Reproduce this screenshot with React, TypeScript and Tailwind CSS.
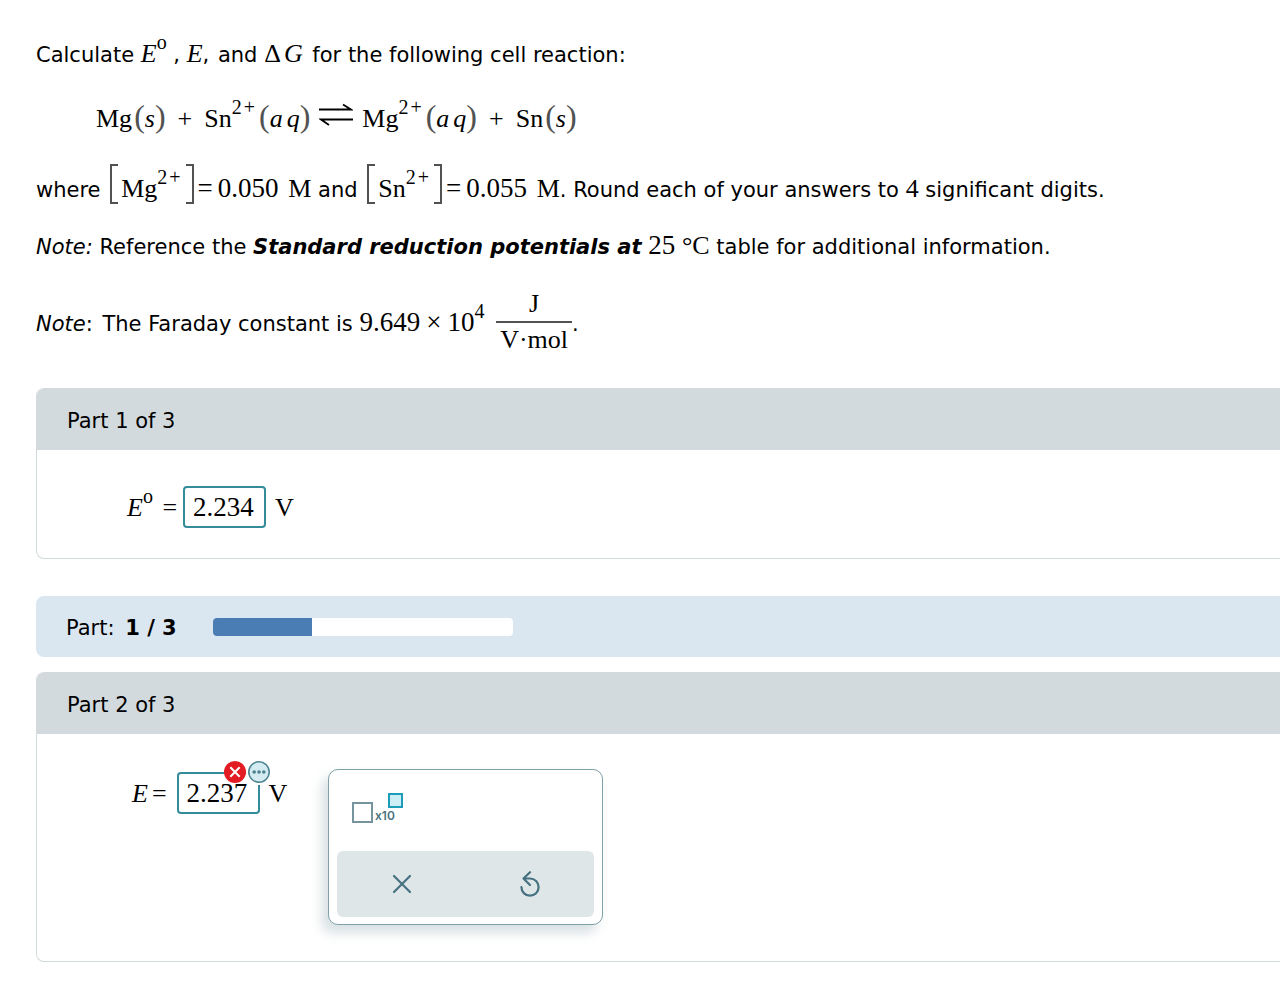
import React, { useState } from 'react';

const math = "font-['Liberation_Serif',serif] text-[26px] leading-none";
const number = "font-['Liberation_Serif',serif] text-[27px] leading-none";

const Sup: React.FC<{ children: React.ReactNode }> = ({ children }) => (
  <sup className="static align-[13px] text-[20px] leading-none">{children}</sup>
);

const Charge = () => (
  <Sup>2<span className="mx-[2px]">+</span></Sup>
);

const Phase: React.FC<{ children: React.ReactNode }> = ({ children }) => (
  <span className="ml-[2px]">
    <span className="text-[32px] leading-none text-neutral-600">(</span>
    <i>{children}</i>
    <span className="text-[32px] leading-none text-neutral-600">)</span>
  </span>
);

const Aqueous = () => (
  <Phase>a<span className="ml-1">q</span></Phase>
);

const Concentration: React.FC<{ symbol: string }> = ({ symbol }) => (
  <span className={`${math} mr-1 ml-[3px] inline-block`}>
    <span className="inline-block h-10 w-2 border-y-2 border-l-2 border-neutral-600 align-[-7px]" />
    <span className="px-[3px]">{symbol}<Charge /></span>
    <span className="inline-block h-10 w-2 border-y-2 border-r-2 border-neutral-600 align-[-7px]" />
  </span>
);

const Equilibrium = () => (
  <svg viewBox="0 0 34 24" className="mx-[9px] inline-block h-6 w-[34px]" fill="none" stroke="black" strokeWidth="1.8" aria-label="is in equilibrium with">
    <path d="M0 6.5H32L24 1.5M34 16.5H2L10 22" />
  </svg>
);

const Panel: React.FC<{ title: string; children: React.ReactNode }> = ({ title, children }) => (
  <section className="rounded-l-lg border-b border-l border-[#d2dadd]">
    <h2 className="rounded-tl-lg bg-[#d2dadd] px-[30px] pt-[17px] pb-[13px] leading-8">{title}</h2>
    {children}
  </section>
);

const inputStyle = 'h-[42px] w-[83px] rounded-sm border-2 border-[#348b99] bg-white px-2 text-[27px] outline-none';

const App: React.FC = () => {
  const [standard, setStandard] = useState('2.234');
  const [potential, setPotential] = useState('2.237');

  return (
    <main className="min-h-screen overflow-x-hidden bg-white pt-8 pb-10 pl-9 font-['DejaVu_Sans',sans-serif] text-[21px] text-black">
      <p className="leading-9">
        Calculate <i className={math}>E</i><span className={math}><Sup>o</Sup></span> , <i className={math}>E</i>, <span className="ml-[2px]">and</span> <span className={math}>Δ<i className="mx-[3px]">G</i></span> for the following cell reaction:
      </p>

      <p className={`${math} mt-6 flex items-baseline pl-[60px]`}>
        <span>Mg<Phase>s</Phase></span>
        <span className="mx-3">+</span>
        <span>Sn<Charge /><Aqueous /></span>
        <Equilibrium />
        <span>Mg<Charge /><Aqueous /></span>
        <span className="mx-3">+</span>
        <span>Sn<Phase>s</Phase></span>
      </p>

      <p className="mt-8">
        where <Concentration symbol="Mg" /><span className={number}>=<span className="mr-[3px] ml-[5px]">0.050</span></span> <span className={math}>M</span> and <Concentration symbol="Sn" /><span className={number}>=<span className="mr-[3px] ml-[5px]">0.055</span></span> <span className={math}>M</span>. Round each of your answers to <span className={math}>4</span> significant digits.
      </p>

      <p className="mt-6 leading-8">
        <i>Note:</i> Reference the <b className="italic">Standard reduction potentials at</b> <span className={number}>25</span> <span className={math}>°C</span> table for additional information.
      </p>

      <p className="mt-7">
        <i>Note</i>: <span className="ml-[3px]">The</span> Faraday constant is <span className={number}>9.649<span className="mx-[6px]">×</span>10<Sup>4</Sup></span>{' '}
        <span className={`${math} ml-[5px] inline-flex flex-col items-center align-[19px]`}>
          <span className="px-4 pb-1">J</span>
          <span className="border-t-2 border-neutral-600 px-1 pt-1">V·mol</span>
        </span>.
      </p>

      <div className="mt-[35px]">
        <Panel title="Part 1 of 3">
          <div className={`${math} flex items-baseline pt-9 pb-[30px] pl-[90px]`}>
            <label htmlFor="standard" className="mr-[6px]"><i>E</i><Sup>o</Sup> <span className="ml-[3px]">=</span></label>
            <input id="standard" className={inputStyle} value={standard} onChange={e => setStandard(e.target.value)} />
            <span className="ml-[9px]">V</span>
          </div>
        </Panel>
      </div>

      <div className="mt-[37px] mb-[15px] flex h-[61px] items-center rounded-l-lg bg-[#dbe7f0] pl-[30px]">
        <span className="mr-9 pt-1">Part: <b className="ml-1">1 / 3</b></span>
        <div className="h-[18px] w-[300px] overflow-hidden rounded bg-white">
          <div className="h-full w-[33%] bg-[#4a7db3]" />
        </div>
      </div>

      <Panel title="Part 2 of 3">
        <div className="flex items-start pt-[35px] pb-9 pl-[95px]">
          <div className={`${math} mt-[3px] flex items-baseline`}>
            <label htmlFor="potential" className="mr-[10px]"><i>E</i><span className="ml-1">=</span></label>
            <div className="relative">
              <input id="potential" className={inputStyle} value={potential} onChange={e => setPotential(e.target.value)} />
              <div className="absolute -top-[11px] left-[47px] flex gap-[2px]">
                <svg viewBox="0 0 22 22" className="h-[22px] w-[22px]" aria-label="Incorrect">
                  <circle cx="11" cy="11" r="11" fill="#e31b23" />
                  <path d="M6.3 6.3l9.4 9.4M15.7 6.3l-9.4 9.4" stroke="white" strokeWidth="2" />
                </svg>
                <button aria-label="More information" className="rounded-full ring-2 ring-white">
                  <svg viewBox="0 0 22 22" className="h-[22px] w-[22px]">
                    <circle cx="11" cy="11" r="10.2" fill="#d3ebf1" stroke="#4b8290" strokeWidth="1.5" />
                    <g fill="#4b8290">
                      <circle cx="6.2" cy="11" r="1.8" />
                      <circle cx="11" cy="11" r="1.8" />
                      <circle cx="15.8" cy="11" r="1.8" />
                    </g>
                  </svg>
                </button>
              </div>
            </div>
            <span className="ml-[9px]">V</span>
          </div>

          <div className="ml-[41px] w-[275px] rounded-[10px] border border-[#7fa0a8] bg-white px-2 pt-2 pb-[7px] shadow-[-6px_8px_12px_rgba(60,100,115,0.2)]">
            <button aria-label="Scientific notation" className="mt-[15px] mb-[27px] ml-[15px] block">
              <svg viewBox="0 0 52 31" className="block h-[31px] w-[52px]">
                <rect x="1" y="10" width="19" height="19" fill="white" stroke="#76949e" strokeWidth="2" />
                <rect x="37" y="1" width="13" height="13" fill="#cdeef4" stroke="#1c9cb8" strokeWidth="2" />
                <text x="23" y="27" fontSize="12" fontFamily="Inter, sans-serif" fontWeight="600" fill="#4b7480">x10</text>
              </svg>
            </button>
            <div className="flex h-[66px] rounded-md bg-[#dfe6e8]">
              <button aria-label="Clear" className="flex flex-1 items-center justify-center">
                <svg viewBox="0 0 20 20" className="h-5 w-5" fill="none" stroke="#467180" strokeWidth="2.2" strokeLinecap="round">
                  <path d="M2 2l16 16M18 2L2 18" />
                </svg>
              </button>
              <button aria-label="Undo" className="flex flex-1 items-center justify-center">
                <svg viewBox="0 0 20 26" className="h-[26px] w-5" fill="none" stroke="#467180" strokeWidth="2.2" strokeLinecap="round" strokeLinejoin="round">
                  <path d="M10 1.2L3.5 7.5L10 14M3.5 7.5H10A8.6 8.6 0 1 1 1.4 16" />
                </svg>
              </button>
            </div>
          </div>
        </div>
      </Panel>
    </main>
  );
};

export default App;
